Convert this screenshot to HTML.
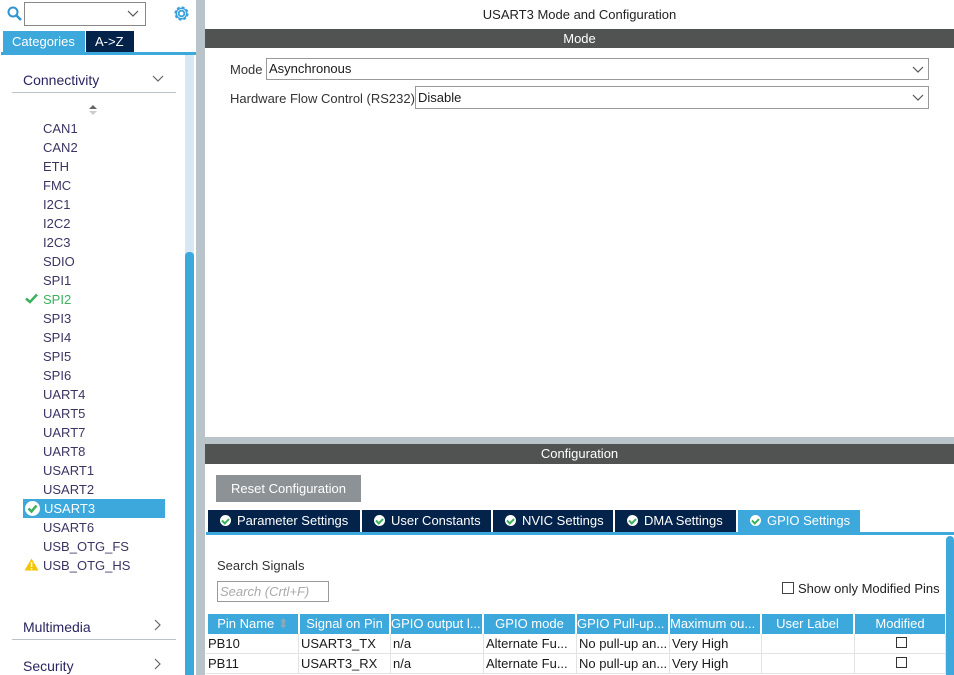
<!DOCTYPE html>
<html><head><style>
*{margin:0;padding:0;box-sizing:border-box}
body{width:954px;height:675px;overflow:hidden;background:#fff;font-family:"Liberation Sans",sans-serif;font-size:13px;color:#1a1a1a;position:relative}
.a{position:absolute}
.li{position:absolute;left:43px;color:#3b3563;font-size:13px}
.tab{position:absolute;top:510px;height:22px;background:#03234b;color:#fff;font-size:13px;line-height:22px;padding-left:12px}
.tab i{display:inline-block;width:11px;height:11px;border-radius:50%;background:#fff;vertical-align:-1px;margin-right:6px;position:relative}
.tab i:after{content:"";position:absolute;left:3px;top:2px;width:3px;height:5px;border:solid #3bb15b;border-width:0 2px 2px 0;transform:rotate(45deg)}
.th{position:absolute;top:614px;height:20px;background:#3ca8dc;color:#fff;line-height:20px;text-align:center;font-size:13px;overflow:hidden;white-space:nowrap}
.td{position:absolute;height:20px;line-height:20px;font-size:13px;padding-left:2px;white-space:nowrap;border-right:1px solid #e3e3e3;border-bottom:1px solid #e3e3e3}
.cb{display:inline-block;width:11px;height:11px;border:1px solid #333;background:#fff}
</style></head><body>
<!-- left panel -->
<svg class="a" style="left:7px;top:6px" width="16" height="16"><circle cx="6" cy="6" r="4.5" fill="none" stroke="#2f95d2" stroke-width="2"/><line x1="9.5" y1="9.5" x2="14" y2="14" stroke="#2f95d2" stroke-width="2.5"/></svg>
<div class="a" style="left:24px;top:2px;width:122px;height:24px;border:1px solid #888"></div>
<svg class="a" style="left:127px;top:10px" width="12" height="8"><path d="M1 1 L6 6 L11 1" fill="none" stroke="#555" stroke-width="1.2"/></svg>
<svg class="a" style="left:172px;top:4px" width="19" height="19" viewBox="0 0 20 20"><circle cx="10" cy="10" r="3" fill="none" stroke="#3aa0dc" stroke-width="2"/><circle cx="10" cy="10" r="6.5" fill="none" stroke="#3aa0dc" stroke-width="2" stroke-dasharray="3 2.1"/><circle cx="10" cy="10" r="5.5" fill="none" stroke="#3aa0dc" stroke-width="1.5"/></svg>
<div class="a" style="left:3px;top:31px;width:82px;height:21px;background:#3ca8dc;color:#fff;line-height:21px;padding-left:9px">Categories</div>
<div class="a" style="left:86px;top:31px;width:48px;height:21px;background:#03234b;color:#fff;line-height:21px;padding-left:9px">A-&gt;Z</div>
<div class="a" style="left:1px;top:52px;width:195px;height:3px;background:#3ca8dc"></div>
<div class="a" style="left:185px;top:55px;width:9px;height:620px;background:#d7e7f4"></div>
<div class="a" style="left:185px;top:252px;width:9px;height:423px;background:#3ca8dc;border-radius:4px 4px 0 0"></div>
<div class="a" style="left:196px;top:0;width:9px;height:675px;background:#b8c3ca"></div>
<div class="a" style="left:205px;top:30px;width:3px;height:10px;background:#555"></div>
<div class="a" style="left:23px;top:72px;font-size:14px;color:#2a2560">Connectivity</div>
<svg class="a" style="left:152px;top:75px" width="12" height="8"><path d="M1 1 L6 6 L11 1" fill="none" stroke="#666" stroke-width="1.2"/></svg>
<div class="a" style="left:12px;top:92px;width:164px;height:1px;background:#b8c3ca"></div>
<svg class="a" style="left:88px;top:104px" width="10" height="12"><path d="M1 5 L5 1 L9 5Z" fill="#666"/><path d="M1 7 L5 11 L9 7Z" fill="#ccc"/></svg>
<div class="li" style="top:121px">CAN1</div>
<div class="li" style="top:140px">CAN2</div>
<div class="li" style="top:159px">ETH</div>
<div class="li" style="top:178px">FMC</div>
<div class="li" style="top:197px">I2C1</div>
<div class="li" style="top:216px">I2C2</div>
<div class="li" style="top:235px">I2C3</div>
<div class="li" style="top:254px">SDIO</div>
<div class="li" style="top:273px">SPI1</div>
<svg class="a" style="left:25px;top:293px" width="13" height="11"><path d="M1 5.5 L5 9 L12 1.5" fill="none" stroke="#3bb15b" stroke-width="2.5"/></svg>
<div class="li" style="top:292px;color:#3bb15b">SPI2</div>
<div class="li" style="top:311px">SPI3</div>
<div class="li" style="top:330px">SPI4</div>
<div class="li" style="top:349px">SPI5</div>
<div class="li" style="top:368px">SPI6</div>
<div class="li" style="top:387px">UART4</div>
<div class="li" style="top:406px">UART5</div>
<div class="li" style="top:425px">UART7</div>
<div class="li" style="top:444px">UART8</div>
<div class="li" style="top:463px">USART1</div>
<div class="li" style="top:482px">USART2</div>
<div class="a" style="left:23px;top:499px;width:142px;height:19px;background:#3ca8dc"></div>
<svg class="a" style="left:24px;top:500px" width="17" height="17"><circle cx="8.5" cy="8.5" r="7.5" fill="#fff"/><path d="M4.5 8.5 L7.5 11.5 L12.5 5.5" fill="none" stroke="#3bb15b" stroke-width="2.5"/></svg>
<div class="li" style="top:501px;left:44px;color:#fff">USART3</div>
<div class="li" style="top:520px">USART6</div>
<div class="li" style="top:539px">USB_OTG_FS</div>
<svg class="a" style="left:24px;top:558px" width="15" height="13"><path d="M7.5 0.5 L14.5 12.5 L0.5 12.5Z" fill="#f5c400"/><rect x="6.8" y="4" width="1.5" height="5" fill="#fff"/><rect x="6.8" y="10" width="1.5" height="1.5" fill="#fff"/></svg>
<div class="li" style="top:558px">USB_OTG_HS</div>
<div class="a" style="left:23px;top:619px;font-size:14px;color:#2a2560">Multimedia</div>
<svg class="a" style="left:154px;top:619px" width="8" height="12"><path d="M1 1 L6 6 L1 11" fill="none" stroke="#666" stroke-width="1.2"/></svg>
<div class="a" style="left:12px;top:639px;width:164px;height:1px;background:#b8c3ca"></div>
<div class="a" style="left:23px;top:658px;font-size:14px;color:#2a2560">Security</div>
<svg class="a" style="left:154px;top:658px" width="8" height="12"><path d="M1 1 L6 6 L1 11" fill="none" stroke="#666" stroke-width="1.2"/></svg>

<!-- right top -->
<div class="a" style="left:205px;top:7px;width:749px;text-align:center;color:#222">USART3 Mode and Configuration</div>
<div class="a" style="left:205px;top:29px;width:749px;height:19px;background:#505352;color:#fff;text-align:center;line-height:19px">Mode</div>
<div class="a" style="left:230px;top:62px;color:#333">Mode</div>
<div class="a" style="left:266px;top:58px;width:663px;height:22px;border:1px solid #999;line-height:20px;padding-left:2px">Asynchronous</div>
<svg class="a" style="left:912px;top:66px" width="12" height="8"><path d="M1 1 L6 6 L11 1" fill="none" stroke="#555" stroke-width="1.2"/></svg>
<div class="a" style="left:230px;top:91px;color:#333">Hardware Flow Control (RS232)</div>
<div class="a" style="left:415px;top:86px;width:514px;height:23px;border:1px solid #999;line-height:21px;padding-left:2px">Disable</div>
<svg class="a" style="left:912px;top:94px" width="12" height="8"><path d="M1 1 L6 6 L11 1" fill="none" stroke="#555" stroke-width="1.2"/></svg>
<div class="a" style="left:205px;top:437px;width:749px;height:7px;background:#b8c3ca"></div>
<div class="a" style="left:205px;top:444px;width:749px;height:20px;background:#505352;color:#fff;text-align:center;line-height:20px">Configuration</div>
<div class="a" style="left:216px;top:475px;width:145px;height:27px;background:#8c9296;color:#fff;line-height:27px;text-align:center">Reset Configuration</div>
<div class="tab" style="left:208px;width:152px"><i></i>Parameter Settings</div>
<div class="tab" style="left:362px;width:129px"><i></i>User Constants</div>
<div class="tab" style="left:493px;width:120px"><i></i>NVIC Settings</div>
<div class="tab" style="left:615px;width:121px"><i></i>DMA Settings</div>
<div class="tab" style="left:738px;width:122px;background:#3ca8dc"><i></i>GPIO Settings</div>
<div class="a" style="left:206px;top:532px;width:748px;height:3px;background:#3ca8dc"></div>
<div class="a" style="left:946px;top:536px;width:8px;height:139px;background:#3ca8dc;border-radius:4px 4px 0 0"></div>
<div class="a" style="left:217px;top:558px;color:#333">Search Signals</div>
<div class="a" style="left:217px;top:581px;width:112px;height:21px;border:1px solid #999;color:#aaa;font-style:italic;line-height:19px;padding-left:2px">Search (Crtl+F)</div>
<div class="a" style="left:782px;top:582px;width:12px;height:12px;border:1px solid #444"></div>
<div class="a" style="left:798px;top:581px;color:#222">Show only Modified Pins</div>
<div class="th" style="left:208px;width:90px">Pin Name <span style="color:#8ab">&#x2B0D;</span></div>
<div class="th" style="left:300px;width:89px">Signal on Pin</div>
<div class="th" style="left:391px;width:91px;text-align:left">GPIO output l...</div>
<div class="th" style="left:484px;width:91px">GPIO mode</div>
<div class="th" style="left:577px;width:91px;text-align:left">GPIO Pull-up...</div>
<div class="th" style="left:670px;width:90px;text-align:left">Maximum ou...</div>
<div class="th" style="left:762px;width:91px">User Label</div>
<div class="th" style="left:855px;width:90px">Modified</div>
<div class="td" style="left:206px;top:634px;width:93px">PB10</div>
<div class="td" style="left:299px;top:634px;width:92px">USART3_TX</div>
<div class="td" style="left:391px;top:634px;width:93px">n/a</div>
<div class="td" style="left:484px;top:634px;width:93px">Alternate Fu...</div>
<div class="td" style="left:577px;top:634px;width:93px">No pull-up an...</div>
<div class="td" style="left:670px;top:634px;width:92px">Very High</div>
<div class="td" style="left:762px;top:634px;width:93px"></div>
<div class="td" style="left:855px;top:634px;width:91px;text-align:center"><span class="cb"></span></div>
<div class="td" style="left:206px;top:654px;width:93px">PB11</div>
<div class="td" style="left:299px;top:654px;width:92px">USART3_RX</div>
<div class="td" style="left:391px;top:654px;width:93px">n/a</div>
<div class="td" style="left:484px;top:654px;width:93px">Alternate Fu...</div>
<div class="td" style="left:577px;top:654px;width:93px">No pull-up an...</div>
<div class="td" style="left:670px;top:654px;width:92px">Very High</div>
<div class="td" style="left:762px;top:654px;width:93px"></div>
<div class="td" style="left:855px;top:654px;width:91px;text-align:center"><span class="cb"></span></div>
</body></html>
